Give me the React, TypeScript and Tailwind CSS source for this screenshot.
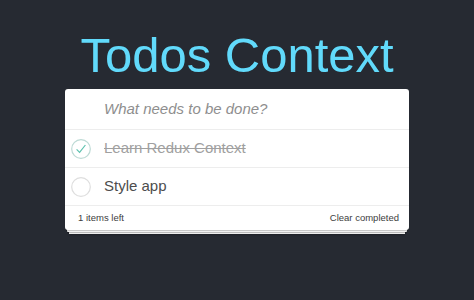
const todos = [
  { id: 1, text: 'Learn Redux Context', completed: true },
  { id: 2, text: 'Style app', completed: false }
];

function Toggle({ checked }: { checked: boolean }) {
  return (
    <svg width="20" height="20" viewBox="0 0 20 20" className="shrink-0">
      <circle cx="10" cy="10" r="9.3" fill="none" stroke={checked ? '#bddad5' : '#dedede'} strokeWidth="1.2" />
      {checked && <path d="M5.6 10.4 L8.6 13.4 L14.4 6" fill="none" stroke="#5dc2af" strokeWidth="1.2" />}
    </svg>
  );
}

export default function App() {
  const left = todos.filter((t) => !t.completed).length;
  return (
    <div className="min-h-[300px] w-full bg-[#262a32] pt-[31px] font-['Liberation_Sans',Arial,sans-serif]">
      <h1 className="text-center text-[49px] leading-[49px] text-[#61dafb]">Todos Context</h1>
      <section className="mx-auto mt-[9px] w-[344px] rounded-[3px] bg-white shadow-[0_1px_1px_rgba(0,0,0,0.2),0_4px_0_-2px_#f6f6f6,0_5px_1px_-2px_rgba(0,0,0,0.25),0_8px_0_-4px_#f3f3f3,0_9px_2px_-4px_rgba(0,0,0,0.25)]">
        <div className="flex h-[41px] items-center border-b border-[#ededed] pl-[39px]">
          <input
            className="w-full bg-transparent text-[15px] italic text-[#4d4d4d] outline-none placeholder:text-[#8e8e8e]"
            placeholder="What needs to be done?"
          />
        </div>
        <ul>
          {todos.map((todo) => (
            <li key={todo.id} className="flex h-[38px] items-center border-b border-[#ededed] pl-[6px]">
              <Toggle checked={todo.completed} />
              <span
                className={
                  todo.completed
                    ? 'ml-[13px] text-[15px] text-[#a0a0a0] line-through'
                    : 'ml-[13px] text-[15px] text-[#4d4d4d]'
                }
              >
                {todo.text}
              </span>
            </li>
          ))}
        </ul>
        <footer className="flex h-[24px] items-center justify-between pl-[13px] pr-[10px] text-[9.5px] text-[#3d3d3d]">
          <span>{left} items left</span>
          <span>Clear completed</span>
        </footer>
      </section>
    </div>
  );
}
